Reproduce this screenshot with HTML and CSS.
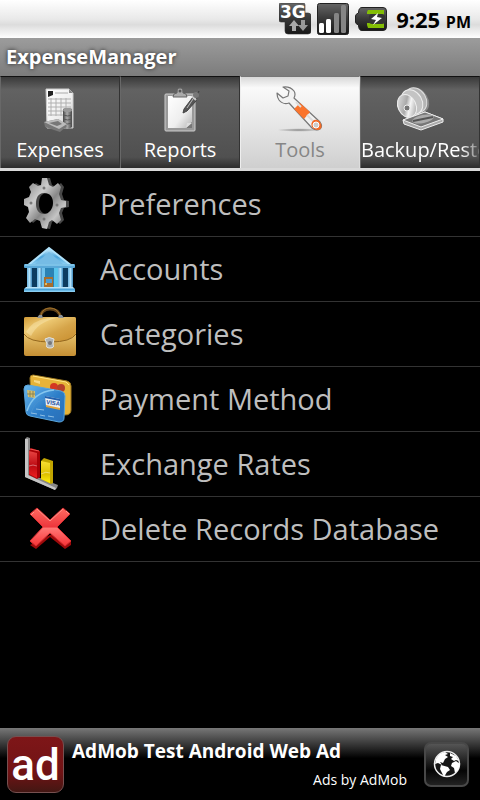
FILE: index.html
```html
<!DOCTYPE html>
<html lang="en">
<head>
<meta charset="utf-8">
<meta name="viewport" content="width=device-width, initial-scale=1">
<title>ExpenseManager</title>
<link rel="stylesheet" href="styles.css">
</head>
<body>
<div class="status">
  <svg width="32" height="32" viewBox="0 0 32 32" role="img" aria-label="3G data">
    <defs>
      <linearGradient id="dark" x1="0" y1="0" x2="0" y2="1"><stop offset="0" stop-color="#666"/><stop offset=".45" stop-color="#3c3c3c"/><stop offset="1" stop-color="#171717"/></linearGradient>
    </defs>
    <path d="M2 0H24Q26 0 26 2V10H29Q32 10 32 13V28Q32 31 29 31H9Q6 31 6 28V19H2Q0 19 0 17V2Q0 0 2 0Z" fill="url(#dark)" stroke="#333" stroke-width=".6"/>
    <text x="1" y="15" class="net">3G</text>
    <path d="M15 17L20 23H17V28H13V23H10Z" fill="#aaa"/><path d="M22 17H26V22H29L24 28L19 22H22Z" fill="#999"/>
  </svg>
  <svg width="32" height="32" viewBox="0 0 32 32" role="img" aria-label="Signal strength">
    <rect x=".5" y=".5" width="31" height="31" rx="2" fill="url(#dark)" stroke="#222"/>
    <rect x="2" y="20" width="5" height="10" rx="1.5" fill="#fff"/><rect x="9" y="16" width="5" height="14" rx="1.5" fill="#fff"/>
    <rect x="17" y="10" width="5" height="20" rx="1.5" fill="#858585"/><rect x="24" y="2" width="5" height="28" rx="1.5" fill="#858585"/>
  </svg>
  <svg width="32" height="24" viewBox="0 0 32 24" role="img" aria-label="Battery charging">
    <path d="M7 .5H28Q31.500 .5 31.500 4V20Q31.500 23.500 28 23.500H7Q3.500 23.500 3.500 18Q.5 17 .5 15V9Q.5 7 3.500 6Q3.500 .5 7 .5Z" fill="url(#dark)" stroke="#222"/>
    <path d="M13 3H29V21H13L12 18V16H17V7H12V5Z" fill="#83bd05"/><rect x="14" y="7" width="16" height="10" rx="3" fill="#343434"/>
    <path d="M23 6L16 12L21 13L18 18L27 11L22 10Z" fill="#fff"/>
  </svg>
  <div class="clock">9:25 <span class="pm">PM</span></div>
</div>
<header class="title"><h1>ExpenseManager</h1></header>
<nav class="tabs">
  <button class="tab" type="button">
    <svg width="48" height="48" viewBox="0 0 48 48" aria-hidden="true">
      <defs><linearGradient id="paper" x1="0" y1="0" x2="1" y2="1"><stop offset="0" stop-color="#fff"/><stop offset=".6" stop-color="#eee"/><stop offset="1" stop-color="#b5b5b5"/></linearGradient>
      <linearGradient id="coin"><stop offset="0" stop-color="#444"/><stop offset=".45" stop-color="#aaa"/><stop offset="1" stop-color="#484848"/></linearGradient></defs>
      <path d="M10 3H33L37 7V42H11Z" fill="url(#paper)" stroke="#ccc"/><path d="M33 3V7H37Z" fill="#888"/>
      <path d="M12 5h5v4l-5 2z" fill="#222"/><path d="M19 7H32" stroke="#aaa"/>
      <path d="M12 13H35M12 17H35M12 21H35M12 25H30M12 29H28M15 12V30M20 12V30M25 12V30M30 12V25" stroke="#b0b0b0"/>
      <path d="M27 23Q31 21 36 23V41Q31 45 27 41Z" fill="url(#coin)"/><ellipse cx="31.500" cy="24" rx="4.500" ry="2" fill="#999"/>
      <path d="M27 29Q32 31 36 29M27 33Q32 35 36 33M27 37Q32 39 36 37" stroke="#555" fill="none"/>
      <path d="M8 36L22 33L31 40L24 46L9 41Z" fill="#777"/><path d="M8 36L22 33L31 38L23 43Z" fill="#bbb"/><path d="M13 37L22 35L26 38L21 40Z" fill="#777"/>
    </svg><span class="label">Expenses</span>
  </button>
  <button class="tab" type="button">
    <svg width="48" height="48" viewBox="0 0 48 48" aria-hidden="true">
      <rect x="9" y="8" width="30" height="37" rx="1" fill="#999" stroke="#ccc"/><path d="M12 10H36V42H12Z" fill="url(#paper)"/><path d="M36 36L30 42H36Z" fill="#777"/><path d="M31 37H36L30 42Z" fill="#ddd"/>
      <path d="M17 11Q17 7 21 7Q21 2 24 2Q27 2 27 7Q31 7 31 11Z" fill="#aaa" stroke="#666"/><circle cx="24" cy="5" r="1.500" fill="#555"/>
      <path d="M43 5L40 15L31 25L27 27L28 23L37 11Z" fill="#555" stroke="#444"/><path d="M39 10L31 22" stroke="#bbb"/><path d="M36 10L40 14" stroke="#ccc" stroke-width="2"/><circle cx="40" cy="9" r="3" fill="#777"/>
    </svg><span class="label">Reports</span>
  </button>
  <button class="tab active" type="button" aria-current="page">
    <svg width="48" height="48" viewBox="0 0 48 48" aria-hidden="true">
      <defs><radialGradient id="shade"><stop offset="0" stop-color="#888"/><stop offset="1" stop-color="#888" stop-opacity="0"/></radialGradient></defs>
      <ellipse cx="23" cy="44" rx="22" ry="1.800" fill="url(#shade)"/>
      <path d="M7 1Q14 0 18 5Q20 8 18 12L44 36Q47 40 44 43Q40 45 36 42L13 17Q7 19 3 14Q1 11 1 7L7 12L12 10L13 5Z" fill="#f2f2f2" stroke="#777" stroke-width="1.200" stroke-linejoin="round"/>
      <path d="M24 17L34 26L28 33L18 23Z" fill="#fa742d"/><path d="M20 16L25 21M31 29L38 36" stroke="#ddd" stroke-width="2"/>
      <path d="M38 34Q43 33 45 38Q47 43 42 44Q38 44 36 41Q34 37 38 34Z" fill="#f36b26"/><circle cx="40" cy="39" r="3" fill="#ccc" stroke="#fff"/>
    </svg><span class="label">Tools</span>
  </button>
  <button class="tab" type="button">
    <svg width="48" height="48" viewBox="0 0 48 48" aria-hidden="true">
      <defs><linearGradient id="disc" x1="0" y1="0" x2="1" y2="1"><stop offset="0" stop-color="#eee"/><stop offset=".45" stop-color="#aaa"/><stop offset=".6" stop-color="#f5f5f5"/><stop offset="1" stop-color="#888"/></linearGradient></defs>
      <ellipse cx="23" cy="14" rx="9" ry="13" transform="rotate(-30 23 14)" fill="#888"/><ellipse cx="20" cy="14" rx="10" ry="13" transform="rotate(-30 20 14)" fill="#b4b4b4" stroke="#ddd"/>
      <ellipse cx="16" cy="16" rx="10" ry="13" transform="rotate(-30 16 16)" fill="#c4c4c4" stroke="#eee"/><ellipse cx="11" cy="20" rx="9" ry="12" transform="rotate(-25 11 20)" fill="url(#disc)" stroke="#eee"/>
      <circle cx="11" cy="22" r="3" fill="#777" stroke="#eee"/>
      <path d="M7 34L29 26L47 33V36L25 44L8 38Z" fill="#aaa" stroke="#eee"/><path d="M7 34L29 26L47 33L25 41Z" fill="#777" stroke="#eee"/>
      <ellipse cx="27" cy="33" rx="11" ry="4" transform="rotate(-12 27 33)" fill="#aaa"/><path d="M17 35L27 33L37 31" stroke="#555" stroke-width="2"/>
    </svg><span class="label long">Backup/Restore</span>
  </button>
</nav>
<main>
<ul class="list">
  <li><a class="row" href="#preferences">
    <svg width="54" height="54" viewBox="0 0 54 54" aria-hidden="true">
      <defs><linearGradient id="gear" x1="0" y1="0" x2="1" y2="1"><stop offset="0" stop-color="#777"/><stop offset=".35" stop-color="#ccc"/><stop offset=".55" stop-color="#888"/><stop offset=".75" stop-color="#c4c4c4"/><stop offset="1" stop-color="#666"/></linearGradient>
      <path id="cog" fill-rule="evenodd" d="M18 1L23 1L25 8L29 10L34 6L37 10L35 17L37 23L42 24L42 30L37 31L35 36L37 43L33 47L28 43L25 45L23 52L18 51L16 44L11 42L6 46L2 41L5 35L4 30L0 28L0 22L5 20L7 15L5 10L9 6L14 9L17 8ZM20 16C14 16 12 21 12 27S15 37 20 37S29 32 29 26S26 16 20 16Z"/></defs>
      <use href="#cog" x="4" y="0" fill="#484848"/><use href="#cog" x="1" fill="url(#gear)"/>
      <g fill="#777"><circle cx="21" cy="11" r="1.500"/><circle cx="8" cy="26" r="1.500"/><circle cx="34" cy="28" r="1.500"/><circle cx="21" cy="42" r="1.500"/></g>
    </svg><span>Preferences</span></a></li>
  <li><a class="row" href="#accounts">
    <svg width="54" height="54" viewBox="0 -2 54 54" aria-hidden="true">
      <defs><linearGradient id="blue" x1="0" y1="0" x2="0" y2="1"><stop offset="0" stop-color="#d4f2ff"/><stop offset=".5" stop-color="#4ba4da"/><stop offset="1" stop-color="#9ad9f8"/></linearGradient>
      <linearGradient id="col"><stop offset="0" stop-color="#69b2e0"/><stop offset=".5" stop-color="#b3e2fa"/><stop offset="1" stop-color="#3c88bc"/></linearGradient></defs>
      <rect x="7" y="24" width="40" height="22" fill="#0c3c60"/><rect x="17" y="24" width="20" height="22" fill="#2b82b4"/>
      <path d="M26 4L4 22H49Z" fill="url(#blue)"/><path d="M26 8L12 20H40Z" fill="#76bce5"/><path d="M4 22L26 4L49 22" fill="none" stroke="#b0e2fb" stroke-width="2"/>
      <rect x="1" y="20" width="51" height="4" rx="1" fill="#5aa9d8"/><path d="M2 21H51" stroke="#a0dcf8"/>
      <g fill="url(#col)"><rect x="4" y="24" width="5" height="20"/><rect x="14" y="24" width="5" height="20"/><rect x="35" y="24" width="5" height="20"/><rect x="45" y="24" width="5" height="20"/></g><rect x="19" y="24" width="3" height="20" fill="#71c2ec"/><rect x="31" y="24" width="4" height="20" fill="#59c5ec"/>
      <rect x="21" y="33" width="9" height="12" fill="#a86e2c"/><rect x="23" y="35" width="6" height="4" fill="#4b9cd5"/><circle cx="23" cy="40" r="1" fill="#f6d478"/>
      <path d="M3 43H50L52 45V48H1V45Z" fill="url(#blue)"/>
    </svg><span>Accounts</span></a></li>
  <li><a class="row" href="#categories">
    <svg width="54" height="54" viewBox="0 0 54 54" aria-hidden="true">
      <defs><linearGradient id="tan" x1="0" y1="0" x2="1" y2="1"><stop offset="0" stop-color="#d19a35"/><stop offset=".3" stop-color="#edc973"/><stop offset=".6" stop-color="#d6a54a"/><stop offset="1" stop-color="#c88d2d"/></linearGradient>
      <linearGradient id="tan2" x1="0" y1="0" x2="0" y2="1"><stop offset="0" stop-color="#bb8a35"/><stop offset=".4" stop-color="#e8c46e"/><stop offset="1" stop-color="#c48e33"/></linearGradient></defs>
      <path d="M17 11Q18 2 27 2T38 11" fill="none" stroke="#60421a" stroke-width="3"/><path d="M18 8Q20 1 27 1T37 8" fill="none" stroke="#a5752b"/>
      <rect x="1" y="10" width="52" height="39" rx="2" fill="url(#tan2)"/>
      <path d="M1 12Q1 10 3 10H51Q53 10 53 12V26Q48 35 27 35T1 26Z" fill="url(#tan)"/><path d="M1 27Q6 35 27 35T53 27" fill="none" stroke="#94671e"/>
      <path d="M3 25Q10 13 25 11H33Q15 15 8 29Z" fill="#fff3c8" opacity=".35"/>
      <path d="M14 11L16 8H19L20 11ZM35 11L36 8H39L41 11Z" fill="#8d9396"/>
      <path d="M22 32Q26 29 31 32L30 37Q32 41 27 41Q22 41 24 37Z" fill="#aeb3b4" stroke="#e3e3de"/><circle cx="27" cy="36" r="2" fill="#777"/>
    </svg><span>Categories</span></a></li>
  <li><a class="row" href="#payment">
    <svg width="54" height="54" viewBox="0 0 54 54" aria-hidden="true">
      <defs><linearGradient id="card" x1="0" y1="0" x2="1" y2="1"><stop offset="0" stop-color="#6bb9ee"/><stop offset=".55" stop-color="#2c7dc8"/><stop offset="1" stop-color="#2a6eb6"/></linearGradient></defs>
      <path d="M10 3Q7 3 7 6L8 30L42 43Q48 43 48 38V14Q48 10 44 9Z" fill="#e7b338" stroke="#9d7922"/><path d="M10 4L43 10L46 13" fill="none" stroke="#ffe686"/><path d="M11 8L17 9V12L11 10Z" fill="#f7d884"/>
      <ellipse cx="31" cy="15" rx="4" ry="4" fill="#d43722"/><ellipse cx="38" cy="16" rx="4" ry="4" fill="#b7402a"/>
      <path d="M5 13Q1 13 1 17L3 40Q3 43 7 44L36 50Q41 50 41 46L42 24Q42 20 38 19Z" fill="url(#card)" stroke="#5aa6dc"/>
      <path d="M4 39Q10 20 31 18" fill="none" stroke="#86c7ef" stroke-width="1.500"/><path d="M8 41Q12 28 22 27" fill="none" stroke="#4790cf"/>
      <path d="M4 18L12 19V26L5 25Z" fill="#d5bf6e"/><path d="M7 19V25M10 19V25M4 22H12" stroke="#8b8554"/>
      <path d="M22 24L37 27V37L23 34Z" fill="#e9f1f8"/><path d="M22 24L37 27V29L22 26Z" fill="#235fac"/><path d="M23 33L37 36V38L23 35Z" fill="#e1a33c"/>
      <text x="23" y="32" class="visa" transform="rotate(8 23 32)">VISA</text>
      <path d="M13 37L21 38M8 41L14 42M17 43L22 44M25 44L31 45" stroke="#8fbfe4"/>
    </svg><span>Payment Method</span></a></li>
  <li><a class="row" href="#rates">
    <svg width="54" height="54" viewBox="0 0 54 54" aria-hidden="true">
      <defs><linearGradient id="red" x1="0" y1="0" x2="0" y2="1"><stop offset="0" stop-color="#e84342"/><stop offset=".55" stop-color="#bc0b13"/><stop offset="1" stop-color="#ef2020"/></linearGradient><linearGradient id="yellow" x1="0" y1="0" x2="0" y2="1"><stop offset="0" stop-color="#f8df33"/><stop offset=".6" stop-color="#dec000"/><stop offset="1" stop-color="#fff20d"/></linearGradient></defs>
      <path d="M2 2L4 0L7 1V37L35 48L34 51L32 53L2 40Z" fill="#888"/><path d="M2 2L5 2V38L33 51L32 53L2 40Z" fill="#c4c4c4"/>
      <path d="M6 14L8 11L17 14V40L14 42L6 38Z" fill="#a70006"/><path d="M6 14L14 16V41L6 37Z" fill="url(#red)"/><path d="M7 12L16 14" stroke="#f35551"/>
      <path d="M18 24L21 21L30 24V46L28 47L18 42Z" fill="#c2a500"/><path d="M18 24L27 26V46L18 42Z" fill="url(#yellow)"/>
      <path d="M6 29Q10 27 14 29M18 37Q23 34 27 36" stroke="#fff" opacity=".4" fill="none"/>
    </svg><span>Exchange Rates</span></a></li>
  <li><a class="row" href="#delete">
    <svg width="54" height="54" viewBox="0 0 54 54" aria-hidden="true">
      <defs><linearGradient id="cross" x1="0" y1="0" x2="0" y2="1"><stop offset="0" stop-color="#ff6a61"/><stop offset=".5" stop-color="#ed363c"/><stop offset=".53" stop-color="#ff7775"/><stop offset="1" stop-color="#f83336"/></linearGradient></defs>
      <path d="M7 39L20 28V33L13 47ZM35 29L48 39V43L42 47L27 35L13 47L7 43Z" fill="#9e0a0b"/>
      <path d="M14 6L27 18L40 6L47 12L34 25L48 39L42 44L27 31L13 44L7 39L20 25L7 12Z" fill="url(#cross)" stroke="#d72d30"/>
      <path d="M14 7L27 19L40 7M8 13L11 10M43 9L46 12" fill="none" stroke="#ff958c"/>
    </svg><span>Delete Records Database</span></a></li>
</ul>
</main>
<footer class="ad">
  <div class="logo">ad</div>
  <div class="copy"><strong>AdMob Test Android Web Ad</strong><small>Ads by AdMob</small></div>
  <button class="web" type="button" aria-label="Open web page">
    <svg width="28" height="28" viewBox="0 0 28 28" aria-hidden="true">
      <circle cx="14" cy="14" r="12.500" fill="#161616" stroke="#eee" stroke-width="1.500"/>
      <path d="M3 9Q6 3 12 2L15 4L12 5L15 7L12 9L10 13L7 12L9 15L5 13L2 14ZM8 15L15 17L17 20L14 22L11 27L9 23L7 19ZM17 3L23 6L26 11L23 10L21 11L18 9L20 7L17 6ZM19 13L23 11L27 14L25 20L22 23L21 18L18 16Z" fill="#fff"/>
    </svg>
  </button>
</footer>
</body>
</html>
```
FILE: styles.css
```css
* { box-sizing: border-box; }
body {
  margin: 0;
  min-height: 100vh;
  display: flex;
  flex-direction: column;
  background: #000;
  color: #fff;
  font-family: "Open Sans", "Noto Sans", sans-serif;
}
svg { display: block; flex: none; }
button { font: inherit; color: inherit; border: 0; }

.status {
  height: 38px;
  display: flex;
  align-items: center;
  justify-content: flex-end;
  gap: 6px;
  padding-right: 9px;
  color: #000;
  background: linear-gradient(#fff, #e9e9e9 50%, #dcdcdc 65%, #fff);
}
.net { font: bold 17px "DejaVu Sans", sans-serif; fill: #fff; }
.visa { font: bold 6px "Liberation Sans", sans-serif; fill: #1d4f9c; }
.clock { margin-left: 3px; font-size: 22px; font-weight: 700; white-space: nowrap; }
.pm { font-size: 16px; }

.title {
  height: 38px;
  display: flex;
  align-items: center;
  padding: 0 6px;
  background: linear-gradient(#9c9c9c, #7c7c7c);
}
.title h1 { margin: 0; font-size: 20px; line-height: 28px; text-shadow: 0 0 4px #222; }

.tabs { display: flex; height: 95px; border-bottom: 3px solid #d9d9d9; }
.tab {
  flex: 1 1 0;
  min-width: 0;
  display: flex;
  flex-direction: column;
  align-items: center;
  padding: 9px 0 0;
  overflow: hidden;
  background: linear-gradient(#3a3a3a, #626262 14%, #505050 88%, #2c2c2c);
  border-top: 1px solid #111;
  border-right: 1px solid #333;
  border-left: 1px solid #686868;
}
.tab.active {
  color: #868686;
  background: linear-gradient(#d8d8d8, #fafafa 12%, #cfcfcf);
  border-color: #777 #ddd #ccc #eee;
}
.label { font-size: 20px; line-height: 32px; white-space: nowrap; }
.long {
  align-self: stretch;
  overflow: hidden;
  text-align: left;
  mask-image: linear-gradient(to right, #000 85%, transparent 105%);
}

main { flex: 1; padding-top: 1px; }
.list { margin: 0; padding: 0; list-style: none; }
.row {
  height: 65px;
  display: flex;
  align-items: center;
  gap: 23px;
  padding: 0 23px;
  border-bottom: 1px solid #333;
  color: #bebebe;
  font-size: 29px;
  text-decoration: none;
  white-space: nowrap;
}
.row span { padding-bottom: 2px; }

.ad {
  height: 72px;
  display: flex;
  align-items: center;
  padding: 0 11px 0 7px;
  background: linear-gradient(#777, #000 42%);
}
.logo {
  width: 57px;
  height: 57px;
  border: 1px solid #775050;
  border-radius: 9px;
  background: linear-gradient(#7e1618, #711315 65%, #431713);
  font: 500 44px/56px Roboto, sans-serif;
  text-align: center;
}
.copy { flex: 1; display: flex; flex-direction: column; gap: 6px; padding: 0 17px 0 8px; }
.copy strong { font-size: 19px; line-height: 26px; }
.copy small { align-self: flex-end; font-size: 14px; line-height: 20px; }
.web {
  width: 45px;
  height: 45px;
  display: grid;
  place-items: center;
  padding: 0;
  border: 2px solid #484848;
  border-radius: 7px;
  background: linear-gradient(#555, #050505 65%, #222);
}
```
